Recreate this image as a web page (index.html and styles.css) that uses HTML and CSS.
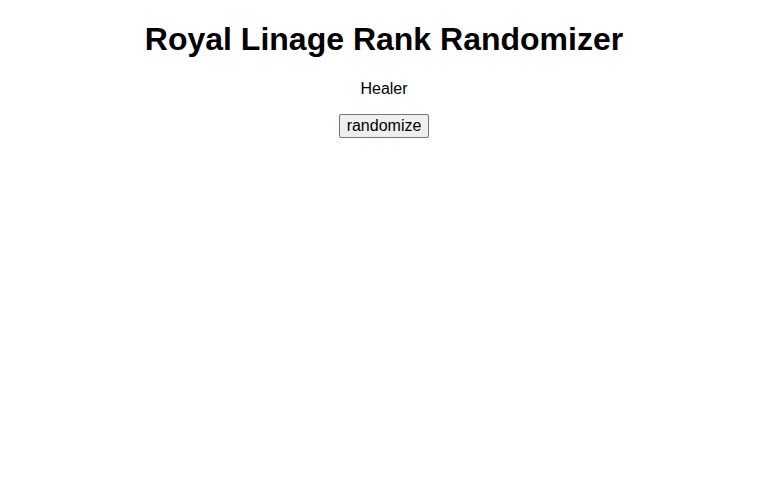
FILE: index.html
```html
<!DOCTYPE html>
<html lang="en">
<head>
  <meta charset="UTF-8">
  <meta name="viewport" content="width=device-width, initial-scale=1.0">
  <title>Royal Linage Rank Randomizer</title>
  <link rel="stylesheet" href="styles.css">
</head>
<body>
  <main class="content">
    <h1>Royal Linage Rank Randomizer</h1>
    <p id="rank" class="rank">Healer</p>
    <div class="actions">
      <button class="randomize-button" onclick="randomize()">randomize</button>
    </div>
  </main>

  <script>
    const RANKS = ['Healer', 'Knight', 'Duke', 'Baron', 'Squire', 'Jester'];

    function randomize() {
      const rank = RANKS[Math.floor(Math.random() * RANKS.length)];
      document.getElementById('rank').textContent = rank;
    }
  </script>
</body>
</html>
```

FILE: styles.css
```css
body {
  margin: 8px;
  font-family: "Liberation Sans", Arial, sans-serif;
  background-color: #ffffff;
  color: #000000;
}
.content {
  text-align: center;
}
.content h1 {
  font-size: 32px;
  margin: 13px 0 22px;
}
.rank {
  font-size: 16px;
  margin: 16px 0;
}
.actions {
  margin: 16px 0;
}
.randomize-button {
  font-family: "Liberation Sans", Arial, sans-serif;
  font-size: 16px;
  color: #000000;
  background-color: #efefef;
  border: 1px solid #767676;
  border-radius: 2px;
  padding: 2px 7px;
}
```
